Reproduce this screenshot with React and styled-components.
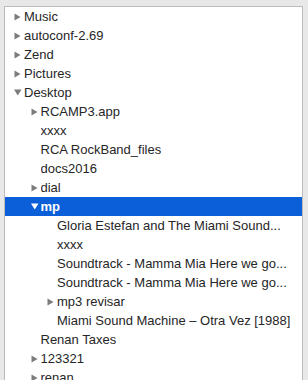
import { createGlobalStyle, styled } from "styled-components"

const Global = createGlobalStyle`
  html, body {
    margin: 0;
    height: 100%;
    overflow: hidden;
    background: #e8e8e8;
  }
  #root {
    height: 100%;
  }
`

const Page = styled.div`
  height: 100%;
  box-sizing: border-box;
  padding: 6px 5px 0 4px;
  font-family: "Liberation Sans", Arial, sans-serif;
  font-size: 13px;
  color: #262626;
`

const Panel = styled.div`
  height: 100%;
  background: #ffffff;
  border: 1px solid #bcbcbc;
  border-bottom: none;
  overflow: hidden;
`

const Row = styled.div`
  display: flex;
  align-items: center;
  height: 19px;
  line-height: 19px;
  padding-left: ${(p) => 9 + p.$level * 16.5}px;
  padding-right: 4px;
  white-space: nowrap;
  overflow: hidden;
  background: ${(p) => (p.$selected ? "#0b5fd8" : "transparent")};
  color: ${(p) => (p.$selected ? "#ffffff" : "inherit")};
  font-weight: ${(p) => (p.$selected ? 700 : 400)};
`

const Toggle = styled.span`
  flex: 0 0 10px;
  width: 10px;
  height: 19px;
  display: flex;
  align-items: center;
  color: ${(p) => (p.$selected ? "#ffffff" : "#7c7c7c")};
`

const Label = styled.span`
  overflow: hidden;
`

function Triangle({ open }) {
  return open ? (
    <svg width="8" height="7" viewBox="0 0 8 7">
      <path d="M0 0.5 H7.5 L3.75 6.5 Z" fill="currentColor" />
    </svg>
  ) : (
    <svg width="7" height="8" viewBox="0 0 7 8">
      <path d="M0.5 0.5 L6.5 4 L0.5 7.5 Z" fill="currentColor" />
    </svg>
  )
}

const items = [
  { level: 0, name: "Music", kind: "closed" },
  { level: 0, name: "autoconf-2.69", kind: "closed" },
  { level: 0, name: "Zend", kind: "closed" },
  { level: 0, name: "Pictures", kind: "closed" },
  { level: 0, name: "Desktop", kind: "open" },
  { level: 1, name: "RCAMP3.app", kind: "closed" },
  { level: 1, name: "xxxx" },
  { level: 1, name: "RCA RockBand_files" },
  { level: 1, name: "docs2016" },
  { level: 1, name: "dial", kind: "closed" },
  { level: 1, name: "mp", kind: "open", selected: true },
  { level: 2, name: "Gloria Estefan and The Miami Sound..." },
  { level: 2, name: "xxxx" },
  { level: 2, name: "Soundtrack - Mamma Mia Here we go..." },
  { level: 2, name: "Soundtrack - Mamma Mia Here we go..." },
  { level: 2, name: "mp3 revisar", kind: "closed" },
  { level: 2, name: "Miami Sound Machine – Otra Vez [1988]" },
  { level: 1, name: "Renan Taxes" },
  { level: 1, name: "123321", kind: "closed" },
  { level: 1, name: "renan", kind: "closed" },
]

export default function App() {
  return (
    <>
      <Global />
      <Page>
        <Panel>
          {items.map((item, i) => (
            <Row key={i} $level={item.level} $selected={item.selected}>
              <Toggle $selected={item.selected}>
                {item.kind && <Triangle open={item.kind === "open"} />}
              </Toggle>
              <Label>{item.name}</Label>
            </Row>
          ))}
        </Panel>
      </Page>
    </>
  )
}
